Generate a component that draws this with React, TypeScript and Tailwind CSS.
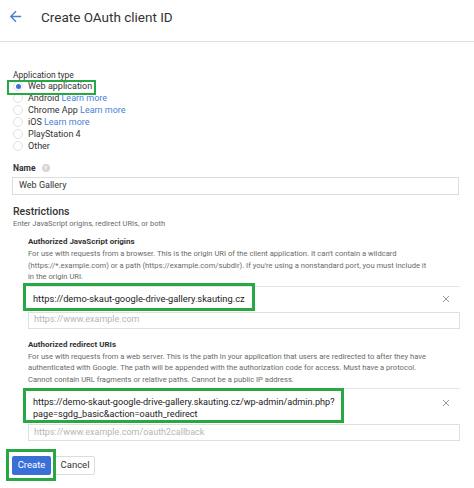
import React from "react";

const green = "border-[#27a844]";

function Radio({ checked, label, learn }: { checked?: boolean; label: string; learn?: boolean }) {
  return (
    <div className="flex items-center h-[12px]">
      <div className="w-[10px] h-[10px] rounded-full border border-[#e0e0e0] flex items-center justify-center shrink-0">
        {checked && <div className="w-[5px] h-[5px] rounded-full bg-[#3b6fd8]" />}
      </div>
      <span className="ml-[5px] text-[9px] leading-[12px] text-[#333]">
        {label}
        {learn && <span className="text-[#4a7fd6]"> Learn more</span>}
      </span>
    </div>
  );
}

function XIcon() {
  return (
    <svg width="8" height="8" viewBox="0 0 8 8" className="shrink-0">
      <path d="M1 1L7 7M7 1L1 7" stroke="#9a9a9a" strokeWidth="1" />
    </svg>
  );
}

export default function App() {
  return (
    <div
      className="relative w-[474px] h-[488px] bg-white overflow-hidden text-[#333]"
      style={{ fontFamily: "Roboto, 'Liberation Sans', sans-serif" }}
    >
      {/* header */}
      <div className="h-[42px] border-b border-[#e0e0e0] flex items-center">
        <svg width="17" height="17" viewBox="0 0 24 24" className="ml-[7px] -mt-[8px]">
          <path d="M20 11H7.83l5.59-5.59L12 4l-8 8 8 8 1.41-1.41L7.83 13H20v-2z" fill="#4a7fd6" />
        </svg>
        <span className="ml-[17px] -mt-[8px] text-[13.5px] leading-[16px] text-[#333]">Create OAuth client ID</span>
      </div>

      <div className="pl-[13px]">
        <div className="mt-[29px] text-[8.5px] leading-[9px] text-[#333]">Application type</div>
        <div className="flex flex-col">
          <Radio checked label="Web application" />
          <Radio label="Android" learn />
          <Radio label="Chrome App" learn />
          <Radio label="iOS" learn />
          <Radio label="PlayStation 4" />
          <Radio label="Other" />
        </div>

        <div className="mt-[11px] flex items-center h-[10px]">
          <span className="text-[8.5px] leading-[10px] font-bold text-[#333]">Name</span>
          <span className="ml-[6px] w-[8px] h-[8px] rounded-full bg-[#d6d6d6] text-white text-[6px] leading-[8px] text-center font-bold">?</span>
        </div>
        <div className="mt-[4px] ml-[-1px] w-[447px] h-[18px] border border-[#dcdcdc] flex items-center pl-[6px] text-[9px] text-[#333]">
          Web Gallery
        </div>

        <div className="mt-[11px] text-[10.5px] leading-[12px] font-medium text-[#333]">Restrictions</div>
        <div className="mt-[1px] text-[7.5px] leading-[10px] text-[#6a6a6a]">Enter JavaScript origins, redirect URIs, or both</div>

        <div className="ml-[15px] w-[432px]">
          <div className="mt-[8px] text-[8px] leading-[10px] font-bold text-[#333]">Authorized JavaScript origins</div>
          <div className="mt-[1px] text-[7.6px] leading-[11.5px] text-[#6a6a6a] whitespace-nowrap">
            For use with requests from a browser. This is the origin URI of the client application. It can't contain a wildcard
            <br />
            (https://*.example.com) or a path (https://example.com/subdir). If you're using a nonstandard port, you must include it
            <br />
            in the origin URI.
          </div>
          <div className="mt-[3px] h-[26px] border-t border-[#e6e6e6] flex items-center justify-between pl-[5px] pr-[10px]">
            <span className="text-[9.3px] text-[#222]">https://demo-skaut-google-drive-gallery.skauting.cz</span>
            <XIcon />
          </div>
          <div className="h-[17px] border border-[#e0e0e0] flex items-center pl-[5px] text-[9px] text-[#b5b5b5]">
            https://www.example.com
          </div>

          <div className="mt-[11px] text-[8px] leading-[10px] font-bold text-[#333]">Authorized redirect URIs</div>
          <div className="mt-[1px] text-[7.6px] leading-[11.5px] text-[#6a6a6a] whitespace-nowrap">
            For use with requests from a web server. This is the path in your application that users are redirected to after they have
            <br />
            authenticated with Google. The path will be appended with the authorization code for access. Must have a protocol.
            <br />
            Cannot contain URL fragments or relative paths. Cannot be a public IP address.
          </div>
          <div className="mt-[3px] h-[36px] border-t border-[#e6e6e6] flex items-start justify-between pl-[5px] pr-[10px] pt-[7px]">
            <span className="text-[9.1px] leading-[12px] text-[#222]">
              https://demo-skaut-google-drive-gallery.skauting.cz/wp-admin/admin.php?
              <br />
              page=sgdg_basic&amp;action=oauth_redirect
            </span>
            <div className="mt-[3px]">
              <XIcon />
            </div>
          </div>
          <div className="h-[17px] border border-[#e0e0e0] flex items-center pl-[5px] text-[9px] text-[#b5b5b5]">
            https://www.example.com/oauth2callback
          </div>
        </div>

        <div className="mt-[15px] ml-[-1px] flex gap-[4px]">
          <button className="w-[39px] h-[19px] bg-[#3b6fd8] rounded-[2px] text-white text-[9.5px]">Create</button>
          <button className="w-[40px] h-[19px] bg-white border border-[#dcdcdc] rounded-[2px] text-[#333] text-[9.5px]">Cancel</button>
        </div>
      </div>

      {/* green highlight overlays */}
      <div className={`absolute left-[7px] top-[80px] w-[89px] h-[15px] border-2 ${green}`} />
      <div className={`absolute left-[23px] top-[283px] w-[232px] h-[28px] border-[3px] ${green}`} />
      <div className={`absolute left-[23px] top-[388px] w-[321px] h-[35px] border-[3px] ${green}`} />
      <div className={`absolute left-[6px] top-[449px] w-[50px] h-[32px] border-[3px] ${green}`} />
    </div>
  );
}
